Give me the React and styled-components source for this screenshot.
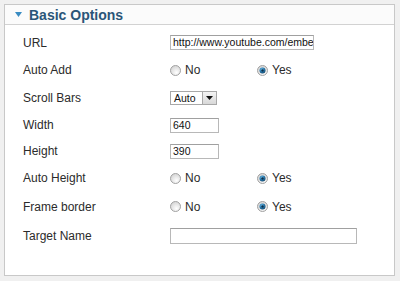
import React from "react";
import styled, { createGlobalStyle } from "styled-components";

const Global = createGlobalStyle`
  html, body { margin: 0; padding: 0; background: #f0f0f0; }
  body { font-family: "Liberation Sans", Arial, sans-serif; }
`;

const Page = styled.div`
  width: 400px;
  height: 281px;
  padding: 4px 5px 5px 4px;
  box-sizing: border-box;
  background: #f0f0f0;
`;

const Panel = styled.div`
  width: 391px;
  height: 272px;
  box-sizing: border-box;
  border: 1px solid #c8c8c8;
  background: #fff;
  display: flex;
  flex-direction: column;
`;

const Header = styled.div`
  height: 19px;
  border-bottom: 1px solid #d2d2d2;
  display: flex;
  align-items: center;
  padding-left: 10px;
  gap: 7px;
  background: #fbfbfb;
`;

const Title = styled.span`
  font-size: 14px;
  font-weight: bold;
  color: #2a5578;
  line-height: 19px;
  margin-top: 1px;
`;

const Body = styled.div`
  padding: 4px 0 0 18px;
  display: flex;
  flex-direction: column;
`;

const Row = styled.div`
  display: grid;
  grid-template-columns: 147px 1fr;
  align-items: center;
  height: ${(p) => p.$h}px;
`;

const Label = styled.span`
  font-size: 12px;
  color: #2b2b2b;
`;

const TextInput = styled.div`
  width: ${(p) => p.$w}px;
  height: ${(p) => p.$hh}px;
  box-sizing: border-box;
  border: 1px solid #b8b8b8;
  border-top-color: #a0a0a0;
  background: #fff;
  font-size: 10.5px;
  line-height: ${(p) => p.$hh - 2}px;
  color: #111;
  padding-left: 2px;
  overflow: hidden;
  white-space: nowrap;
`;

const RadioGroup = styled.div`
  display: flex;
  align-items: center;
`;

const RadioOption = styled.label`
  display: flex;
  align-items: center;
  gap: 4px;
  width: 87px;
  font-size: 12px;
  color: #2b2b2b;
`;

const Select = styled.div`
  width: 47px;
  height: 14px;
  box-sizing: border-box;
  border: 1px solid #a8a8a8;
  display: flex;
  align-items: stretch;
  background: #fff;
`;

const SelectText = styled.span`
  flex: 1;
  font-size: 10.5px;
  line-height: 12px;
  padding-left: 3px;
  color: #111;
`;

const SelectButton = styled.span`
  width: 13px;
  border-left: 1px solid #a8a8a8;
  background: linear-gradient(#f4f4f4, #d8d8d8);
  display: flex;
  align-items: center;
  justify-content: center;
`;

const Radio = ({ checked }) => (
  <svg width="11" height="11" viewBox="0 0 11 11">
    <defs>
      <radialGradient id="rbg" cx="0.6" cy="0.7" r="0.7">
        <stop offset="0" stopColor="#ffffff" />
        <stop offset="1" stopColor="#d4d4d4" />
      </radialGradient>
      <radialGradient id="rdot" cx="0.4" cy="0.35" r="0.7">
        <stop offset="0" stopColor="#7ec3ea" />
        <stop offset="0.5" stopColor="#2a7fb5" />
        <stop offset="1" stopColor="#0e3f63" />
      </radialGradient>
    </defs>
    <circle cx="5.5" cy="5.5" r="5" fill="url(#rbg)" stroke="#a2a2a2" strokeWidth="1" />
    {checked && <circle cx="5.5" cy="5.5" r="3" fill="url(#rdot)" />}
    {checked && <circle cx="5.5" cy="5.5" r="1.2" fill="#0d2f4a" />}
  </svg>
);

const YesNo = () => (
  <RadioGroup>
    <RadioOption>
      <Radio />
      No
    </RadioOption>
    <RadioOption>
      <Radio checked />
      Yes
    </RadioOption>
  </RadioGroup>
);

export default function App() {
  return (
    <Page>
      <Global />
      <Panel>
        <Header>
          <svg width="7" height="5" viewBox="0 0 7 5">
            <polygon points="0,0 7,0 3.5,5" fill="#3a8cc2" />
          </svg>
          <Title>Basic Options</Title>
        </Header>
        <Body>
          <Row $h={27}>
            <Label>URL</Label>
            <TextInput $w={144} $hh={15}>http://www.youtube.com/embed/</TextInput>
          </Row>
          <Row $h={28}>
            <Label>Auto Add</Label>
            <YesNo />
          </Row>
          <Row $h={28}>
            <Label>Scroll Bars</Label>
            <Select>
              <SelectText>Auto</SelectText>
              <SelectButton>
                <svg width="7" height="4" viewBox="0 0 7 4">
                  <polygon points="0,0 7,0 3.5,4" fill="#111" />
                </svg>
              </SelectButton>
            </Select>
          </Row>
          <Row $h={26}>
            <Label>Width</Label>
            <TextInput $w={49} $hh={15}>640</TextInput>
          </Row>
          <Row $h={26}>
            <Label>Height</Label>
            <TextInput $w={49} $hh={15}>390</TextInput>
          </Row>
          <Row $h={28}>
            <Label>Auto Height</Label>
            <YesNo />
          </Row>
          <Row $h={29}>
            <Label>Frame border</Label>
            <YesNo />
          </Row>
          <Row $h={29}>
            <Label>Target Name</Label>
            <TextInput $w={187} $hh={16} />
          </Row>
        </Body>
      </Panel>
    </Page>
  );
}
